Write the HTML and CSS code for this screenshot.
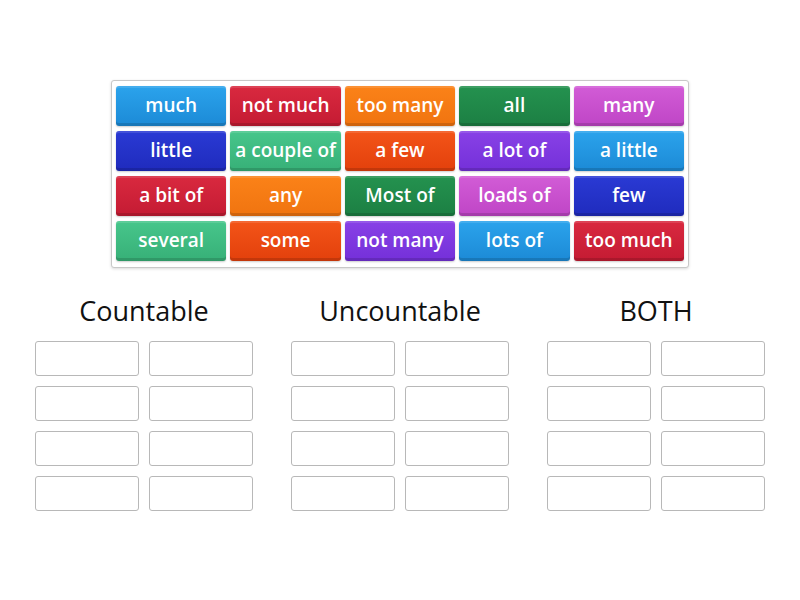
FILE: index.html
```html
<!DOCTYPE html>
<html lang="en">
<head>
    <meta charset="UTF-8">
    <meta name="viewport" content="width=device-width, initial-scale=1.0">
    <title>Group sort</title>
    <link rel="stylesheet" href="styles.css">
</head>
<body>
    <div class="board">
        <div class="tile blue">much</div>
        <div class="tile red">not much</div>
        <div class="tile orange">too many</div>
        <div class="tile green">all</div>
        <div class="tile pink">many</div>

        <div class="tile navy">little</div>
        <div class="tile mint">a couple of</div>
        <div class="tile flame">a few</div>
        <div class="tile purple">a lot of</div>
        <div class="tile blue">a little</div>

        <div class="tile red">a bit of</div>
        <div class="tile orange">any</div>
        <div class="tile green">Most of</div>
        <div class="tile pink">loads of</div>
        <div class="tile navy">few</div>

        <div class="tile mint">several</div>
        <div class="tile flame">some</div>
        <div class="tile purple">not many</div>
        <div class="tile blue">lots of</div>
        <div class="tile red">too much</div>
    </div>

    <div class="groups">
        <div class="group">
            <h2>Countable</h2>
            <div class="slots">
                <div class="slot"></div><div class="slot"></div>
                <div class="slot"></div><div class="slot"></div>
                <div class="slot"></div><div class="slot"></div>
                <div class="slot"></div><div class="slot"></div>
            </div>
        </div>
        <div class="group">
            <h2>Uncountable</h2>
            <div class="slots">
                <div class="slot"></div><div class="slot"></div>
                <div class="slot"></div><div class="slot"></div>
                <div class="slot"></div><div class="slot"></div>
                <div class="slot"></div><div class="slot"></div>
            </div>
        </div>
        <div class="group">
            <h2>BOTH</h2>
            <div class="slots">
                <div class="slot"></div><div class="slot"></div>
                <div class="slot"></div><div class="slot"></div>
                <div class="slot"></div><div class="slot"></div>
                <div class="slot"></div><div class="slot"></div>
            </div>
        </div>
    </div>
</body>
</html>
```

FILE: styles.css
```css
body {
    margin: 0;
    background-color: #fff;
    font-family: "Open Sans", "DejaVu Sans", sans-serif;
    color: #111;
}
.board {
    width: 568px;
    margin: 80px auto 0;
    padding: 5px 4px 6px 4px;
    display: grid;
    grid-template-columns: repeat(5, 1fr);
    column-gap: 4px;
    row-gap: 5px;
    background-color: #fff;
    border: 1px solid #c8c8c8;
    border-radius: 3px;
    box-shadow: 0 1px 3px rgba(0, 0, 0, 0.15);
}
.tile {
    height: 40px;
    line-height: 38px;
    text-align: center;
    color: #fff;
    font-size: 19px;
    font-weight: 600;
    white-space: nowrap;
    overflow: hidden;
    border-radius: 3px;
    box-shadow: inset 0 -3px 0 rgba(0, 0, 0, 0.14), inset 0 2px 0 rgba(255, 255, 255, 0.12), 0 1px 2px rgba(0, 0, 0, 0.2);
}
.blue   { background: linear-gradient(#2ba3ec, #1c8ad6); }
.red    { background: linear-gradient(#d9293f, #c41b33); }
.orange { background: linear-gradient(#fb8218, #f07410); }
.green  { background: linear-gradient(#24924f, #1c7f43); }
.pink   { background: linear-gradient(#d25cd6, #bf45c6); }
.navy   { background: linear-gradient(#2a3ad4, #1f2bbd); }
.mint   { background: linear-gradient(#47c68b, #37b077); }
.flame  { background: linear-gradient(#f35418, #e3400c); }
.purple { background: linear-gradient(#8841e6, #7430d9); }

.groups {
    display: flex;
    justify-content: center;
    gap: 38px;
    margin-top: 26px;
}
.group {
    width: 218px;
}
.group h2 {
    margin: 0 0 13px;
    height: 34px;
    line-height: 34px;
    text-align: center;
    font-size: 27px;
    font-weight: 400;
    color: #111;
}
.slots {
    display: grid;
    grid-template-columns: 1fr 1fr;
    column-gap: 10px;
    row-gap: 10px;
}
.slot {
    height: 33px;
    border: 1px solid #b8b8b8;
    border-radius: 3px;
    background-color: #fff;
}
```
